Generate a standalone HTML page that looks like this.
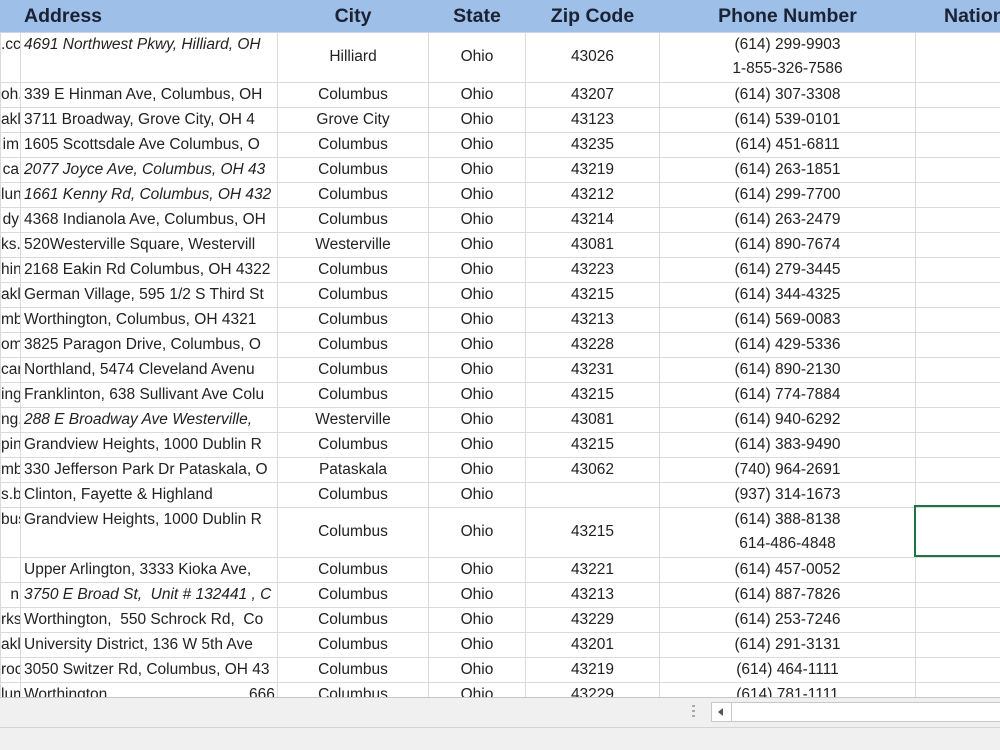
<!DOCTYPE html>
<html><head><meta charset="utf-8"><style>
*{margin:0;padding:0;box-sizing:border-box}
body{width:1000px;height:750px;overflow:hidden;background:#fff;font-family:"Liberation Sans",sans-serif;color:#222;position:relative}
.wrap{position:absolute;left:0;top:0;width:1000px;height:697px;overflow:hidden}
table{border-collapse:collapse;table-layout:fixed;width:1135px;margin-top:0}
td{border:1px solid #dadada;white-space:nowrap;overflow:hidden;font-size:15.5px;height:24px;padding:0 3px;text-align:center;vertical-align:middle;line-height:24px}
td.a{text-align:left}
td.f{text-align:right;padding:0 1px 0 0;text-overflow:clip}
tr.h td{background:#9dbfe8;font-weight:bold;font-size:19.5px;height:32px;color:#1a2233;border-color:#9dbfe8;border-top:none;border-bottom:1px solid #c9d6e6}
tr.d td{height:49px;line-height:24.5px}
tr.d td.t{vertical-align:top}
i{font-style:italic}
.bar{position:absolute;left:0;top:697px;width:1000px;height:30px;background:#f0f0f0;border-top:1px solid #c6c6c6}
.bot{position:absolute;left:0;top:727px;width:1000px;height:23px;background:#f0f0f0;border-top:1px solid #d4d4d4}
.track{position:absolute;left:711px;top:4px;width:300px;height:20px;background:#fff;border:1px solid #c8c8c8}
.btn{position:absolute;left:0;top:0;width:20px;height:18px;border-right:1px solid #c8c8c8}
.btn:after{content:"";position:absolute;left:6px;top:5px;border-right:5px solid #555;border-top:4px solid transparent;border-bottom:4px solid transparent}
.dots{position:absolute;left:692px;top:7px;width:3px;height:15px;background:repeating-linear-gradient(#aaa 0 2px,transparent 2px 5px)}
.sel{position:absolute;left:914px;top:505px;width:90px;height:52px;border:2px solid #217346}
</style></head><body>
<div class="wrap"><table>
<colgroup><col style="width:20px"><col style="width:257px"><col style="width:151px"><col style="width:97px"><col style="width:134px"><col style="width:256px"><col style="width:220px"></colgroup>
<tr class="h"><td></td><td class="a">Address</td><td>City</td><td>State</td><td>Zip Code</td><td>Phone Number</td><td class="a" style="padding-left:28px">Nation</td></tr>
<tr class="d"><td class="f t">.cc</td><td class="a t"><i>4691 Northwest Pkwy, Hilliard, OH</i></td><td>Hilliard</td><td>Ohio</td><td>43026</td><td>(614) 299-9903<br>1-855-326-7586</td><td></td></tr>
<tr><td class="f">oh.</td><td class="a">339 E Hinman Ave, Columbus, OH</td><td>Columbus</td><td>Ohio</td><td>43207</td><td>(614) 307-3308</td><td></td></tr>
<tr><td class="f">akli</td><td class="a">3711 Broadway, Grove City, OH 4</td><td>Grove City</td><td>Ohio</td><td>43123</td><td>(614) 539-0101</td><td></td></tr>
<tr><td class="f">im</td><td class="a">1605 Scottsdale Ave Columbus, O</td><td>Columbus</td><td>Ohio</td><td>43235</td><td>(614) 451-6811</td><td></td></tr>
<tr><td class="f">ca</td><td class="a"><i>2077 Joyce Ave, Columbus, OH 43</i></td><td>Columbus</td><td>Ohio</td><td>43219</td><td>(614) 263-1851</td><td></td></tr>
<tr><td class="f">lun</td><td class="a"><i>1661 Kenny Rd, Columbus, OH 432</i></td><td>Columbus</td><td>Ohio</td><td>43212</td><td>(614) 299-7700</td><td></td></tr>
<tr><td class="f">dy</td><td class="a">4368 Indianola Ave, Columbus, OH</td><td>Columbus</td><td>Ohio</td><td>43214</td><td>(614) 263-2479</td><td></td></tr>
<tr><td class="f">ks.c</td><td class="a">520Westerville Square, Westervill</td><td>Westerville</td><td>Ohio</td><td>43081</td><td>(614) 890-7674</td><td></td></tr>
<tr><td class="f">hin</td><td class="a">2168 Eakin Rd Columbus, OH 4322</td><td>Columbus</td><td>Ohio</td><td>43223</td><td>(614) 279-3445</td><td></td></tr>
<tr><td class="f">akli</td><td class="a">German Village, 595 1/2 S Third St</td><td>Columbus</td><td>Ohio</td><td>43215</td><td>(614) 344-4325</td><td></td></tr>
<tr><td class="f">mbi</td><td class="a">Worthington, Columbus, OH 4321</td><td>Columbus</td><td>Ohio</td><td>43213</td><td>(614) 569-0083</td><td></td></tr>
<tr><td class="f">om</td><td class="a">3825 Paragon Drive, Columbus, O</td><td>Columbus</td><td>Ohio</td><td>43228</td><td>(614) 429-5336</td><td></td></tr>
<tr><td class="f">car</td><td class="a">Northland, 5474 Cleveland Avenu</td><td>Columbus</td><td>Ohio</td><td>43231</td><td>(614) 890-2130</td><td></td></tr>
<tr><td class="f">ing</td><td class="a">Franklinton, 638 Sullivant Ave Colu</td><td>Columbus</td><td>Ohio</td><td>43215</td><td>(614) 774-7884</td><td></td></tr>
<tr><td class="f">ng.</td><td class="a"><i>288 E Broadway Ave Westerville,</i></td><td>Westerville</td><td>Ohio</td><td>43081</td><td>(614) 940-6292</td><td></td></tr>
<tr><td class="f">pin</td><td class="a">Grandview Heights, 1000 Dublin R</td><td>Columbus</td><td>Ohio</td><td>43215</td><td>(614) 383-9490</td><td></td></tr>
<tr><td class="f">mb</td><td class="a">330 Jefferson Park Dr Pataskala, O</td><td>Pataskala</td><td>Ohio</td><td>43062</td><td>(740) 964-2691</td><td></td></tr>
<tr><td class="f">s.bi</td><td class="a">Clinton, Fayette &amp; Highland</td><td>Columbus</td><td>Ohio</td><td></td><td>(937) 314-1673</td><td></td></tr>
<tr class="d"><td class="f t">bus</td><td class="a t">Grandview Heights, 1000 Dublin R</td><td>Columbus</td><td>Ohio</td><td>43215</td><td>(614) 388-8138<br>614-486-4848</td><td></td></tr>
<tr><td class="f"></td><td class="a">Upper Arlington, 3333 Kioka Ave,</td><td>Columbus</td><td>Ohio</td><td>43221</td><td>(614) 457-0052</td><td></td></tr>
<tr><td class="f">n</td><td class="a"><i>3750 E Broad St,&nbsp; Unit # 132441 , C</i></td><td>Columbus</td><td>Ohio</td><td>43213</td><td>(614) 887-7826</td><td></td></tr>
<tr><td class="f">rks.</td><td class="a">Worthington,&nbsp; 550 Schrock Rd,&nbsp; Co</td><td>Columbus</td><td>Ohio</td><td>43229</td><td>(614) 253-7246</td><td></td></tr>
<tr><td class="f">akli</td><td class="a">University District, 136 W 5th Ave</td><td>Columbus</td><td>Ohio</td><td>43201</td><td>(614) 291-3131</td><td></td></tr>
<tr><td class="f">roc</td><td class="a">3050 Switzer Rd, Columbus, OH 43</td><td>Columbus</td><td>Ohio</td><td>43219</td><td>(614) 464-1111</td><td></td></tr>
<tr><td class="f">lum</td><td class="a" style="position:relative">Worthington<span style="position:absolute;left:228px">666</span></td><td>Columbus</td><td>Ohio</td><td>43229</td><td>(614) 781-1111</td><td></td></tr>
</table></div>
<div class="sel"></div>
<div class="bar"><div class="dots"></div><div class="track"><div class="btn"></div></div></div>
<div class="bot"></div>
</body></html>
